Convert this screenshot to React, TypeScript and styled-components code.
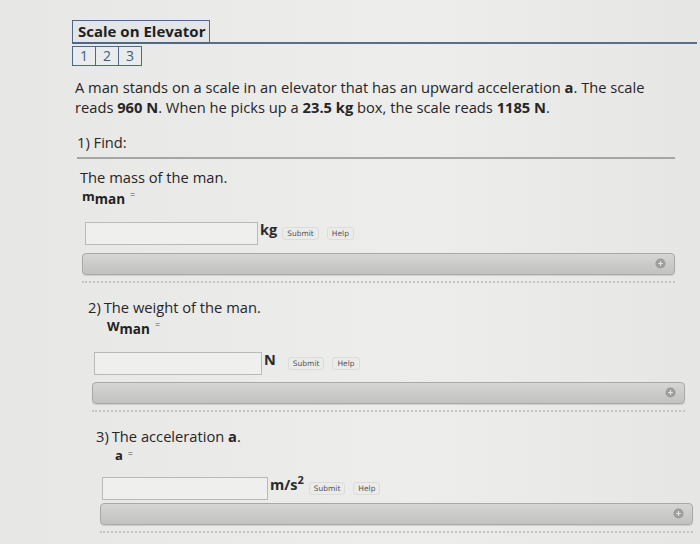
import styled, { createGlobalStyle } from "styled-components";

const GlobalStyle = createGlobalStyle`
  html, body {
    margin: 0;
    padding: 0;
    background: #e9e9e8;
  }
  body {
    font-family: "Open Sans", "DejaVu Sans", sans-serif;
    color: #2a2a2a;
  }
`;

type Part = {
  number?: string;
  title: React.ReactNode;
  symbol: string;
  sub?: string;
  unit: React.ReactNode;
  indent: number;
  inputWidth: number;
  top: number;
  rowGap: number;
  barGap: number;
  find?: boolean;
};

const parts: Part[] = [
  {
    title: "The mass of the man.",
    symbol: "m",
    sub: "man",
    unit: "kg",
    indent: 8,
    inputWidth: 173,
    top: 16,
    rowGap: 17,
    barGap: 8,
    find: true,
  },
  {
    number: "2)",
    title: "The weight of the man.",
    symbol: "W",
    sub: "man",
    unit: "N",
    indent: 18,
    inputWidth: 168,
    top: 15,
    rowGap: 17,
    barGap: 7,
  },
  {
    number: "3)",
    title: (
      <>
        The acceleration <b>a</b>.
      </>
    ),
    symbol: "a",
    unit: (
      <>
        m/s<sup>2</sup>
      </>
    ),
    indent: 26,
    inputWidth: 166,
    top: 15,
    rowGap: 13,
    barGap: 3,
  },
];

export default function App() {
  return (
    <>
      <GlobalStyle />
      <Page>
        <Header>
          <TitleBox>Scale on Elevator</TitleBox>
          <HeaderRule />
        </Header>
        <Tabs>
          <Tab>1</Tab>
          <Tab>2</Tab>
          <Tab>3</Tab>
        </Tabs>
        <Problem>
          <Line>
            A man stands on a scale in an elevator that has an upward acceleration{" "}
            <b>a</b>. The scale
          </Line>
          <Line>
            reads <b>960 N</b>. When he picks up a <b>23.5 kg</b> box, the scale
            reads <b>1185 N</b>.
          </Line>
        </Problem>

        {parts.map((p, i) => (
          <PartBlock key={i} $indent={p.indent} $top={p.top}>
            {p.find && (
              <>
                <FindHeading>1) Find:</FindHeading>
                <FindRule />
              </>
            )}
            <Question $shift={p.find ? 2 : 0}>
              {p.number && <Num>{p.number}</Num>}
              {p.title}
            </Question>
            <Symbol $pad={p.find ? 2 : 17}>
              {p.symbol}
              {p.sub && <sub>{p.sub}</sub>}
              <Eq>=</Eq>
            </Symbol>
            <AnswerRow $pad={p.find ? 5 : 4} $gap={p.rowGap}>
              <AnswerInput $w={p.inputWidth} />
              <Unit>{p.unit}</Unit>
              <SmallButton $gap={p.unit === "N" ? 12 : 5}>Submit</SmallButton>
              <SmallButton $gap={8}>Help</SmallButton>
            </AnswerRow>
            <HintBar $gap={p.barGap}>
              <PlusDot>
                <svg width="11" height="11" viewBox="0 0 10 10">
                  <circle cx="5" cy="5" r="4.6" fill="#9d9d9c" />
                  <path d="M5 2.8v4.4M2.8 5h4.4" stroke="#e2e2e2" strokeWidth="1.1" />
                </svg>
              </PlusDot>
            </HintBar>
            <Dotted />
          </PartBlock>
        ))}
      </Page>
    </>
  );
}

const Page = styled.div`
  padding: 20px 3px 0 72px;
  height: 524px;
  overflow: hidden;
  background: linear-gradient(90deg, #e7e7e6 0%, #ededec 60%, #e6e6e5 100%);
`;

const Header = styled.div`
  display: flex;
  align-items: flex-end;
`;

const TitleBox = styled.div`
  border: 1px solid #4f6887;
  border-bottom-width: 2px;
  padding: 0 4px 0 5px;
  height: 21px;
  line-height: 21px;
  font-size: 15px;
  font-weight: 700;
  color: #1f1f1f;
  background: #e4e5e6;
`;

const HeaderRule = styled.div`
  flex: 1;
  border-bottom: 2px solid #586f8c;
`;

const Tabs = styled.div`
  display: flex;
  margin-top: 2px;
`;

const Tab = styled.div`
  width: 22px;
  height: 18px;
  border: 1px solid #4f6887;
  margin-right: -1px;
  text-align: center;
  line-height: 18px;
  font-size: 14px;
  color: #3c5d86;
  background: #eaebec;
`;

const Problem = styled.div`
  margin: 11px 30px 0 3px;
  font-size: 14.7px;
  line-height: 20px;
  color: #262626;

  b {
    font-weight: 700;
  }
`;

const Line = styled.div`
  white-space: nowrap;
`;

const PartBlock = styled.section<{ $indent: number; $top: number }>`
  margin-left: ${(p) => p.$indent}px;
  margin-right: ${(p) => 30 - p.$indent}px;
  padding-top: ${(p) => p.$top}px;
`;

const FindHeading = styled.div`
  font-size: 14.7px;
  line-height: 18px;
  margin-left: -3px;
`;

const FindRule = styled.div`
  margin: 6px 0 9px -3px;
  border-bottom: 2px solid #a6a6a6;
`;

const Question = styled.div<{ $shift: number }>`
  font-size: 14.7px;
  line-height: 18px;
  color: #262626;
  margin-left: ${(p) => p.$shift - 2}px;

  b {
    font-weight: 700;
  }
`;

const Num = styled.span`
  margin-right: 3px;
`;

const Symbol = styled.div<{ $pad: number }>`
  padding-left: ${(p) => p.$pad}px;
  font-size: 13px;
  font-weight: 700;
  line-height: 18px;
  color: #222;

  sub {
    font-size: 13.5px;
    vertical-align: -3px;
    line-height: 0;
  }
`;

const Eq = styled.span`
  font-weight: 400;
  font-size: 9px;
  margin-left: 5px;
  vertical-align: 3px;
  color: #555;
`;

const AnswerRow = styled.div<{ $pad: number; $gap: number }>`
  display: flex;
  align-items: center;
  padding-left: ${(p) => p.$pad}px;
  margin-top: ${(p) => p.$gap}px;
`;

const AnswerInput = styled.div<{ $w: number }>`
  width: ${(p) => p.$w}px;
  height: 23px;
  border: 1px solid #b9b9b8;
  background: #efefee;
  box-sizing: border-box;
`;

const Unit = styled.span`
  margin-left: 2px;
  font-size: 14.5px;
  font-weight: 700;
  color: #2a2a2a;
  align-self: flex-start;
  line-height: 16px;

  sup {
    font-size: 11px;
    line-height: 0;
  }
`;

const SmallButton = styled.span<{ $gap: number }>`
  margin-left: ${(p) => p.$gap}px;
  padding: 1px 4px;
  border: 1px solid #dcdcdb;
  border-radius: 3px;
  background: #ebebea;
  font-family: "DejaVu Sans", sans-serif;
  font-size: 7.5px;
  color: #555;
`;

const HintBar = styled.div<{ $gap: number }>`
  position: relative;
  margin: ${(p) => p.$gap}px 0 0 2px;
  height: 20px;
  border: 1px solid #a9a9a8;
  border-radius: 4px;
  background: linear-gradient(180deg, #d6d6d5 0%, #cacac9 55%, #c2c2c1 100%);
  box-shadow: 0 1px 1px rgba(0, 0, 0, 0.12);
`;

const PlusDot = styled.span`
  position: absolute;
  right: 8px;
  top: 4px;
  line-height: 0;
`;

const Dotted = styled.div`
  margin: 6px 0 0 2px;
  border-bottom: 2px dotted #c4c4c3;
`;
